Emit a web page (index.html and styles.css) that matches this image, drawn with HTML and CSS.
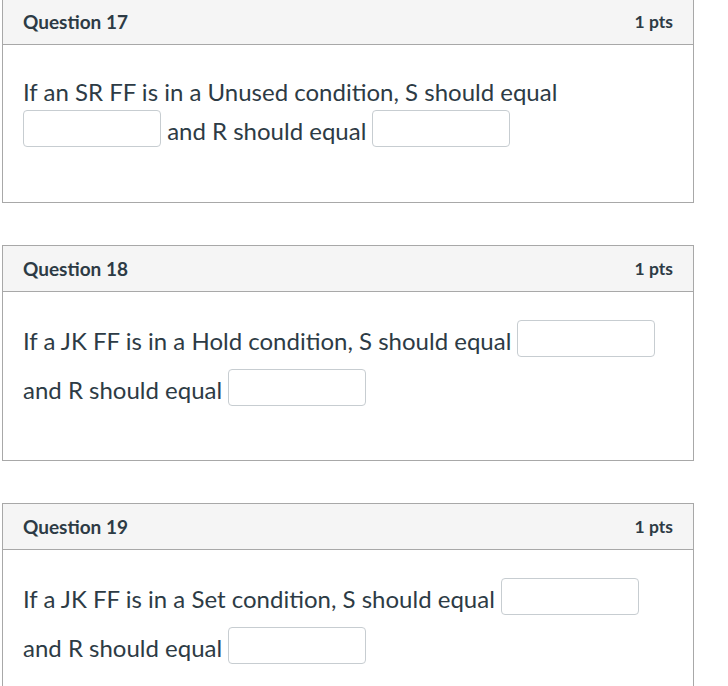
FILE: index.html
```html
<!DOCTYPE html>
<html>
<head>
<meta charset="utf-8">
<link rel="stylesheet" href="styles.css">
</head>
<body>
<div class="page">
  <div class="question first">
    <div class="q-header"><span class="q-name">Question 17</span><span class="q-pts">1 pts</span></div>
    <div class="q-body">
      <p class="q-text">If an SR FF is in a Unused condition, S should equal <input class="blank" type="text"> and R should equal <input class="blank" type="text"></p>
    </div>
  </div>
  <div class="question">
    <div class="q-header"><span class="q-name">Question 18</span><span class="q-pts">1 pts</span></div>
    <div class="q-body">
      <p class="q-text">If a JK FF is in a Hold condition, S should equal <input class="blank" type="text"> and R should equal <input class="blank" type="text"></p>
    </div>
  </div>
  <div class="question">
    <div class="q-header"><span class="q-name">Question 19</span><span class="q-pts">1 pts</span></div>
    <div class="q-body">
      <p class="q-text">If a JK FF is in a Set condition, S should equal <input class="blank" type="text"> and R should equal <input class="blank" type="text"></p>
    </div>
  </div>
</div>
</body>
</html>
```

FILE: styles.css
```css
html, body {
  margin: 0;
  padding: 0;
  background: #ffffff;
}
body {
  font-family: Lato, "Liberation Sans", sans-serif;
  color: #2d3b45;
}
.page {
  padding: 0 34px 0 2px;
  display: flex;
  flex-direction: column;
  gap: 42px;
}
.question {
  border: 1px solid #a8a8a8;
  background: #fff;
}
.question.first {
  margin-top: -2px;
}
.q-header {
  display: flex;
  justify-content: space-between;
  align-items: center;
  height: 45px;
  padding: 0 20px;
  background: #f5f5f5;
  border-bottom: 1px solid #a8a8a8;
  font-weight: bold;
}
.q-name {
  font-size: 19px;
}
.q-pts {
  font-size: 17.5px;
}
.q-body {
  padding: 27px 20px 43px;
}
.first .q-body {
  padding-top: 30px;
  padding-bottom: 44px;
}
.q-text {
  margin: 0;
  font-size: 24px;
  line-height: 34px;
}
.blank {
  display: inline-block;
  vertical-align: middle;
  box-sizing: border-box;
  width: 138px;
  height: 37px;
  margin: 1px 0 11px;
  padding: 0 8px;
  border: 1px solid #c7cdd1;
  border-radius: 4px;
  background: #fff;
  font: inherit;
}
```
